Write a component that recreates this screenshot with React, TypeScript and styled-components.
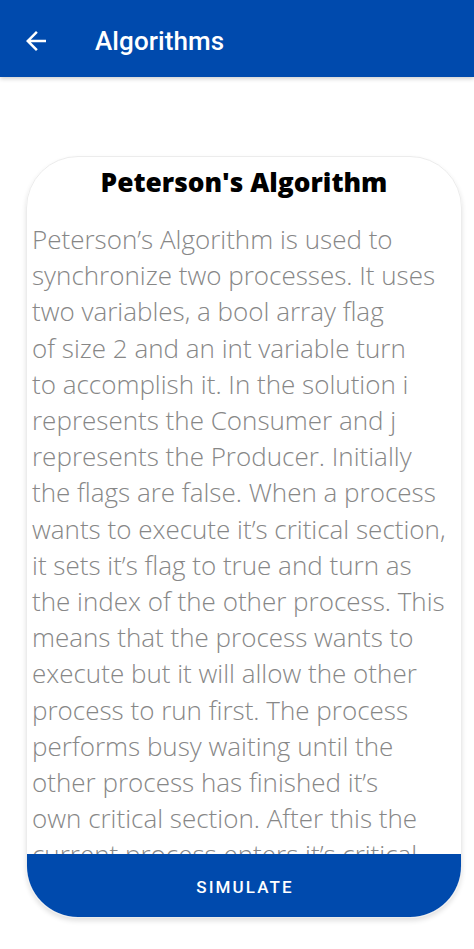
import React from 'react'
import styled, { createGlobalStyle } from 'styled-components'

const GlobalStyle = createGlobalStyle`
  html, body {
    margin: 0;
    padding: 0;
    background: #ffffff;
  }
  * { box-sizing: border-box; }
`

const BLUE = '#004aad'

const Page = styled.div`
  width: 474px;
  height: 949px;
  display: flex;
  flex-direction: column;
  background: #fff;
  overflow: hidden;
`

const Header = styled.header`
  height: 77px;
  flex-shrink: 0;
  background: ${BLUE};
  display: flex;
  align-items: center;
  padding: 5px 0 0 21px;
  gap: 44px;
  box-shadow: 0 2px 4px rgba(0, 0, 0, 0.18);
  position: relative;
  z-index: 1;
`

const BackButton = styled.button`
  background: none;
  border: none;
  padding: 0;
  width: 30px;
  height: 30px;
  display: flex;
  cursor: pointer;
`

const HeaderTitle = styled.h1`
  margin: 0;
  color: #fff;
  font-family: Roboto, "Liberation Sans", sans-serif;
  font-weight: 500;
  font-size: 26px;
  letter-spacing: 0.1px;
`

const Main = styled.main`
  flex: 1;
  min-height: 0;
  display: flex;
  padding: 79px 12px 31px 26px;
`

const Card = styled.section`
  flex: 1;
  min-height: 0;
  display: flex;
  flex-direction: column;
  border: 1px solid #ececec;
  border-radius: 52px;
  overflow: hidden;
  box-shadow: 0 3px 5px rgba(0, 0, 0, 0.12);
`

const CardTitle = styled.h2`
  margin: 0;
  padding-top: 7px;
  text-align: center;
  font-family: "Open Sans", "Liberation Sans", sans-serif;
  font-weight: 800;
  font-size: 26.3px;
  line-height: 36px;
  color: #000;
`

const TextArea = styled.div`
  flex: 1;
  min-height: 0;
  overflow: hidden;
  padding: 21px 0 0 5px;
`

const Line = styled.div`
  font-family: "Open Sans", "Liberation Sans", sans-serif;
  font-weight: 300;
  font-size: 26px;
  line-height: 36.2px;
  color: #878787;
  white-space: nowrap;
`

const SimulateButton = styled.button`
  height: 63px;
  flex-shrink: 0;
  border: none;
  background: ${BLUE};
  color: #fff;
  font-family: Roboto, "Liberation Sans", sans-serif;
  font-weight: 500;
  font-size: 17px;
  letter-spacing: 2.1px;
  padding: 2px 0 0 2px;
  cursor: pointer;
`

const lines = [
  'Peterson’s Algorithm is used to',
  'synchronize two processes. It uses',
  'two variables, a bool array flag',
  'of size 2 and an int variable turn',
  'to accomplish it. In the solution i',
  'represents the Consumer and j',
  'represents the Producer. Initially',
  'the flags are false. When a process',
  'wants to execute it’s critical section,',
  'it sets it’s flag to true and turn as',
  'the index of the other process. This',
  'means that the process wants to',
  'execute but it will allow the other',
  'process to run first. The process',
  'performs busy waiting until the',
  'other process has finished it’s',
  'own critical section. After this the',
  'current process enters it’s critical',
  'section and executes.',
]

export default function App() {
  return (
    <Page>
      <GlobalStyle />
      <Header>
        <BackButton aria-label="Back">
          <svg width="30" height="30" viewBox="0 0 24 24" fill="#fff">
            <path d="M20 11H7.83l5.59-5.59L12 4l-8 8 8 8 1.41-1.41L7.83 13H20v-2z" />
          </svg>
        </BackButton>
        <HeaderTitle>Algorithms</HeaderTitle>
      </Header>
      <Main>
        <Card>
          <CardTitle>Peterson's Algorithm</CardTitle>
          <TextArea>
            {lines.map((l, i) => (
              <Line key={i}>{l}</Line>
            ))}
          </TextArea>
          <SimulateButton>SIMULATE</SimulateButton>
        </Card>
      </Main>
    </Page>
  )
}
